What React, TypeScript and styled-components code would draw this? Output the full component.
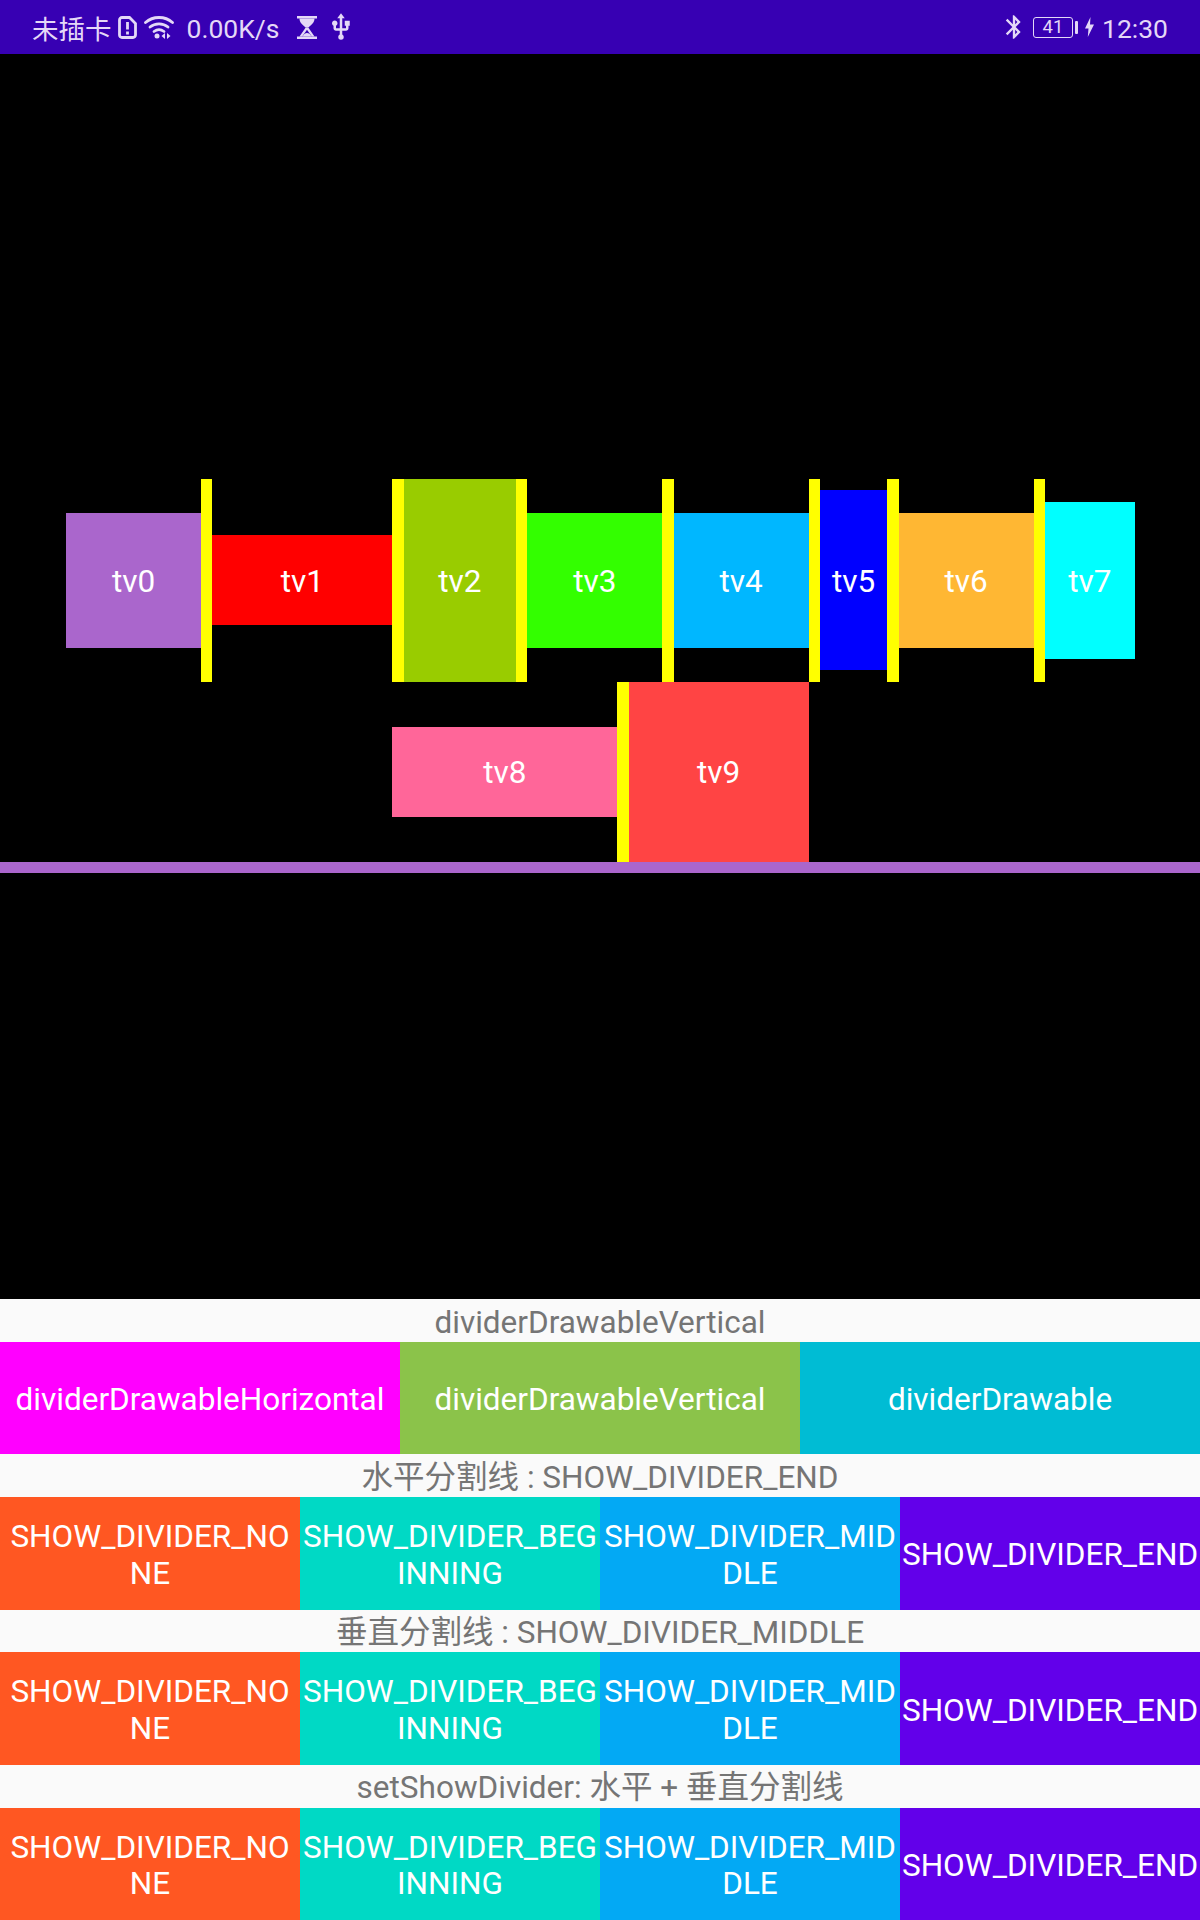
import { Fragment } from "react";
import styled, { createGlobalStyle } from "styled-components";
import { MdBluetooth, MdUsb } from "react-icons/md";

const GlobalStyle = createGlobalStyle`
  html, body {
    margin: 0;
    padding: 0;
    background: #000;
  }
  body {
    font-family: Roboto, "Noto Sans CJK SC", sans-serif;
  }
`;

const Page = styled.div`
  display: flex;
  flex-direction: column;
  width: 1200px;
  height: 1920px;
  overflow: hidden;
`;

const StatusBar = styled.div`
  display: flex;
  align-items: center;
  justify-content: space-between;
  flex: none;
  height: 54px;
  padding: 0 32px;
  box-sizing: border-box;
  background: #3700b3;
  color: #e4d8f7;
`;

const StatusGroup = styled.div`
  display: flex;
  align-items: center;
`;

const Carrier = styled.span`
  padding-top: 2px;
  font-family: "Noto Sans CJK SC", sans-serif;
  font-size: 26.5px;
  line-height: 50px;
`;

const StatusText = styled.span<{ $left: number }>`
  padding-top: 4px;
  font-size: 26.5px;
  margin-left: ${props => props.$left}px;
  line-height: 50px;
`;

const Icon = styled.svg<{ $left: number }>`
  display: block;
  flex: none;
  margin-left: ${props => props.$left}px;
`;

const Battery = styled.div`
  display: flex;
  align-items: center;
  justify-content: center;
  width: 40px;
  height: 21px;
  margin-left: 5px;
  border: 1.5px solid #e4d8f7;
  border-radius: 3px;
  font-size: 18.5px;
  box-sizing: border-box;
`;

const BatteryNub = styled.div`
  width: 3px;
  height: 13px;
  margin-left: 2px;
  background: #e4d8f7;
  border-radius: 1px;
`;

const Stage = styled.main`
  display: flex;
  flex-direction: column;
  justify-content: center;
  flex: 1;
  padding-bottom: 1px;
  background: #000;
`;

const FlexRow = styled.div`
  display: flex;
  align-items: center;
  justify-content: center;
  padding-left: 1px;
`;

const Divider = styled.div`
  align-self: stretch;
  flex: none;
  width: 11.25px;
  background: #ffff00;
`;

const HorizontalDivider = styled.div`
  height: 11.25px;
  background: #aa66cc;
`;

const Tile = styled.div<{ $w: number; $h: number; $bg: string }>`
  display: flex;
  align-items: center;
  justify-content: center;
  flex: none;
  box-sizing: border-box;
  width: ${props => props.$w}px;
  height: ${props => props.$h}px;
  padding-top: 2.5px;
  background: ${props => props.$bg};
  color: #fff;
  font-size: 31.5px;
`;

const Panel = styled.section`
  flex: none;
  height: 621px;
  background: #fafafa;
`;

const Label = styled.div`
  box-sizing: border-box;
  height: 42.75px;
  padding-top: 2.5px;
  font-size: 31.5px;
  line-height: 42px;
  color: #757575;
  text-align: center;
`;

const ButtonRow = styled.div`
  display: flex;
  height: 112.5px;
`;

const Action = styled.div<{ $bg: string }>`
  display: flex;
  align-items: center;
  justify-content: center;
  flex: 1 1 0;
  min-width: 0;
  padding-top: 5px;
  background: ${props => props.$bg};
  color: #fff;
  font-size: 31.5px;
  line-height: 36.75px;
  text-align: center;
  word-break: break-all;
`;

const row1 = [
  { name: "tv0", w: 135, h: 135, bg: "#aa66cc" },
  { name: "tv1", w: 180, h: 90, bg: "#ff0000" },
  { name: "tv2", w: 112.5, h: 202.5, bg: "#99cc00" },
  { name: "tv3", w: 135, h: 135, bg: "#33ff00" },
  { name: "tv4", w: 135, h: 135, bg: "#00b7ff" },
  { name: "tv5", w: 67.5, h: 180, bg: "#0000ff" },
  { name: "tv6", w: 135, h: 135, bg: "#ffb733" },
  { name: "tv7", w: 90, h: 157.5, bg: "#00ffff" },
];

const row2 = [
  { name: "tv8", w: 225, h: 90, bg: "#ff6699" },
  { name: "tv9", w: 180, h: 180, bg: "#ff4444" },
];

const drawables = [
  { text: "dividerDrawableHorizontal", bg: "#ff00ff" },
  { text: "dividerDrawableVertical", bg: "#8bc34a" },
  { text: "dividerDrawable", bg: "#00bcd4" },
];

const showModes = [
  { text: "SHOW_DIVIDER_NONE", bg: "#ff5722" },
  { text: "SHOW_DIVIDER_BEGINNING", bg: "#00d9c5" },
  { text: "SHOW_DIVIDER_MIDDLE", bg: "#03a9f4" },
  { text: "SHOW_DIVIDER_END", bg: "#6200ea" },
];

type TileData = { name: string; w: number; h: number; bg: string };

function TileRow({ items }: { items: TileData[] }) {
  return (
    <FlexRow>
      {items.map((item, i) => (
        <Fragment key={item.name}>
          {i > 0 && <Divider />}
          <Tile $w={item.w} $h={item.h} $bg={item.bg}>{item.name}</Tile>
        </Fragment>
      ))}
    </FlexRow>
  );
}

function ActionRow({ items }: { items: { text: string; bg: string }[] }) {
  return (
    <ButtonRow>
      {items.map(item => (
        <Action key={item.text} $bg={item.bg}>{item.text}</Action>
      ))}
    </ButtonRow>
  );
}

function App() {
  return (
    <Page>
      <GlobalStyle />
      <StatusBar>
        <StatusGroup>
          <Carrier>未插卡</Carrier>
          <Icon $left={6} width="19" height="23" viewBox="0 0 19 23" fill="none" stroke="#e4d8f7" strokeWidth="2.8">
            <path d="M4 1.500h7.500l6 6V19a2.500 2.500 0 0 1-2.500 2.500H4A2.500 2.500 0 0 1 1.500 19V4A2.500 2.500 0 0 1 4 1.500z" />
            <path d="M9.500 6v7.500M9.500 15.500v3" />
          </Icon>
          <Icon $left={7} width="30" height="24" viewBox="0 0 30 24" fill="none" stroke="#e4d8f7" strokeWidth="2.8" strokeLinecap="round">
            <path d="M1.500 7.500C9 .8 21 .8 28.500 7.500" />
            <path d="M6 12c5-4.300 13-4.300 18 0" />
            <path d="M10 16.500c3-2.300 7-2.300 10 0" />
            <circle cx="13" cy="21" r="2.500" fill="#e4d8f7" stroke="none" />
            <path d="M21 18v6l-3.500-3z" fill="#e4d8f7" stroke="none" />
            <path d="M23 18v6l3.500-3z" fill="#e4d8f7" stroke="none" />
          </Icon>
          <StatusText $left={13}>0.00K/s</StatusText>
          <Icon $left={18} width="20" height="23" viewBox="0 0 20 23" fill="#e4d8f7">
            <path d="M0 0h20v2.500H0zM0 20.500h20V23H0z" />
            <path d="M2.500 2.500h15c0 4-3 6.500-6.200 9h-2.600c-3.200-2.500-6.200-5-6.200-9z" />
            <path d="M8.700 11.500 2.500 20.500H5.200L10 13.800l4.800 6.700h2.700l-6.200-9z" />
            <path d="M5.500 20.500c1-2.500 3-3.500 4.500-3.500s3.500 1 4.500 3.500z" />
          </Icon>
          <Icon as={MdUsb} $left={9} size={30} />
        </StatusGroup>
        <StatusGroup>
          <Icon as={MdBluetooth} $left={0} size={28} />
          <Battery>41</Battery>
          <BatteryNub />
          <Icon $left={7} width="9" height="20" viewBox="0 0 9 20" fill="#e4d8f7">
            <path d="M5.500 0 0 11.500h3.500L2.800 20 9 7.500H5z" />
          </Icon>
          <StatusText $left={8}>12:30</StatusText>
        </StatusGroup>
      </StatusBar>
      <Stage>
        <TileRow items={row1} />
        <TileRow items={row2} />
        <HorizontalDivider />
      </Stage>
      <Panel>
        <Label>dividerDrawableVertical</Label>
        <ActionRow items={drawables} />
        <Label>水平分割线 : SHOW_DIVIDER_END</Label>
        <ActionRow items={showModes} />
        <Label>垂直分割线 : SHOW_DIVIDER_MIDDLE</Label>
        <ActionRow items={showModes} />
        <Label>setShowDivider: 水平 + 垂直分割线</Label>
        <ActionRow items={showModes} />
      </Panel>
    </Page>
  );
}

export default App;
